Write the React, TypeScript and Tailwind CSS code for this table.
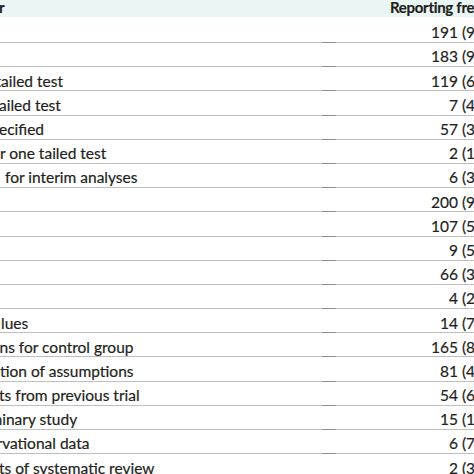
import React from 'react'

type Row = {
  label: string
  shift: string
  count: string
  pct: string
}

// visible part of the label column only (table is cropped on the left)
const rows: Row[] = [
  { label: '', shift: 'ml-0', count: '191', pct: '(95.5)' },
  { label: '', shift: 'ml-0', count: '183', pct: '(91.5)' },
  { label: 'tailed test', shift: '-ml-[4.5px]', count: '119', pct: '(65.0)' },
  { label: 'ailed test', shift: '-ml-[1px]', count: '7', pct: '(4.0)' },
  { label: 'ecified', shift: '-ml-[1px]', count: '57', pct: '(31.1)' },
  { label: 'r one tailed test', shift: 'ml-0', count: '2', pct: '(1.1)' },
  { label: 'for interim analyses', shift: 'ml-[5px]', count: '6', pct: '(3.0)' },
  { label: '', shift: 'ml-0', count: '200', pct: '(99.5)' },
  { label: '', shift: 'ml-0', count: '107', pct: '(53.5)' },
  { label: '', shift: 'ml-0', count: '9', pct: '(5.0)' },
  { label: '', shift: 'ml-0', count: '66', pct: '(33.0)' },
  { label: '', shift: 'ml-0', count: '4', pct: '(2.0)' },
  { label: 'lues', shift: 'ml-[1px]', count: '14', pct: '(7.0)' },
  { label: 'ns for control group', shift: '-ml-[0.5px]', count: '165', pct: '(82.5)' },
  { label: 'tion of assumptions', shift: 'ml-0', count: '81', pct: '(49.1)' },
  { label: 'ts from previous trial', shift: '-ml-[1px]', count: '54', pct: '(66.7)' },
  { label: 'minary study', shift: '-ml-[10.5px]', count: '15', pct: '(18.5)' },
  { label: 'rvational data', shift: '-ml-[3.5px]', count: '6', pct: '(7.4)' },
  { label: 'ts of systematic review', shift: '-ml-[1px]', count: '2', pct: '(3.7)' },
]

export default function App() {
  return (
    <div
      className="w-[474px] h-[474px] overflow-hidden bg-white text-[#231f20] text-[15.5px] [-webkit-text-stroke:0.2px_#231f20]"
      style={{ fontFamily: 'Lato, "Open Sans", sans-serif' }}
    >
      <div className="w-[540px]">
        {/* Header */}
        <div className="flex h-[17px] bg-[#eaf6f3] font-bold text-[15px] leading-[14px]">
          <div className="w-[390px] shrink-0 overflow-hidden whitespace-nowrap">
            <span className="-ml-[1px] inline-block">r</span>
          </div>
          <div className="whitespace-nowrap tracking-[-0.3px]">Reporting frequency, n (%)</div>
        </div>

        {/* Body */}
        {rows.map((row, i) => (
          <div
            key={i}
            className={`flex ${i === 0 ? 'h-[26px] pt-[7px]' : 'h-[24.2px] pt-[5px]'}`}
          >
            <div className="w-[336px] shrink-0 flex items-center overflow-hidden whitespace-nowrap border-b border-black/25">
              <span className={`inline-block ${row.shift}`}>{row.label}</span>
            </div>
            <div className="-ml-[14px] flex items-center flex-1 whitespace-nowrap border-b border-black/25">
              <span className="w-[136px] shrink-0 text-right">{row.count}</span>
              <span className="whitespace-pre"> {row.pct}</span>
            </div>
          </div>
        ))}
      </div>
    </div>
  )
}
